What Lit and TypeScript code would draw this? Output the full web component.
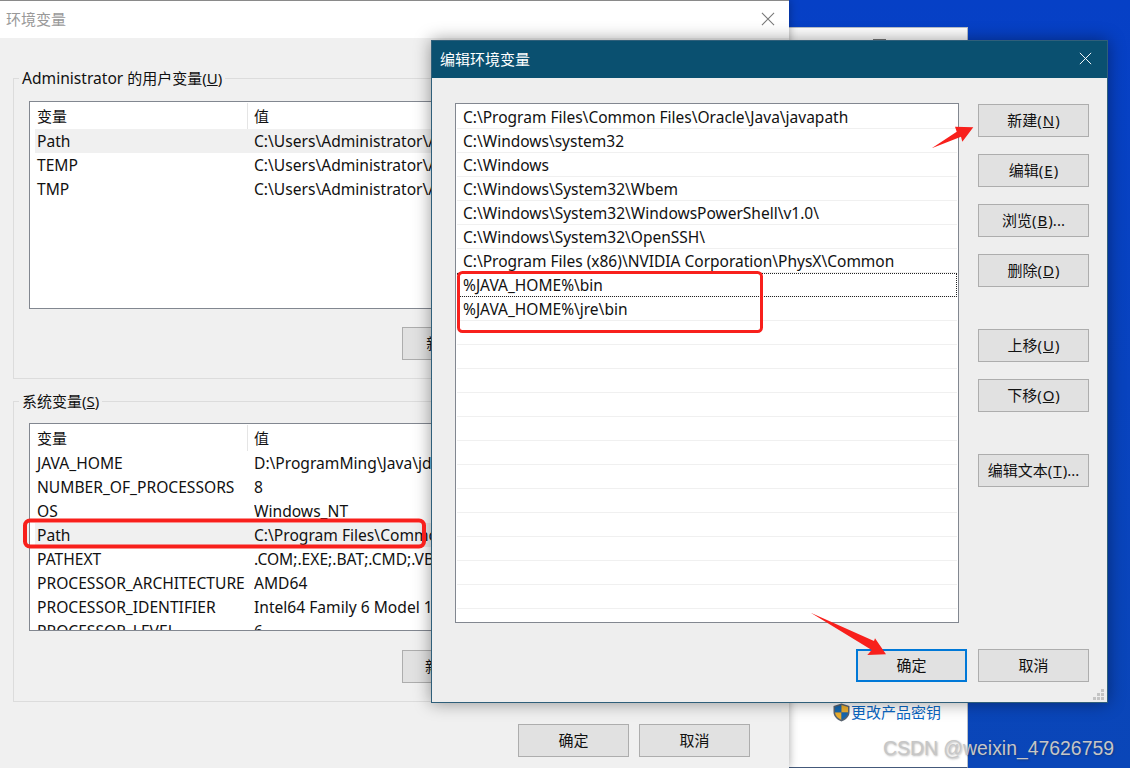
import { LitElement, html, css, svg } from "lit";
import { customElement } from "lit/decorators.js";

const userVars = [
  ["Path", "C:\\Users\\Administrator\\AppData\\Local\\Microsoft\\WindowsApps;"],
  ["TEMP", "C:\\Users\\Administrator\\AppData\\Local\\Temp"],
  ["TMP", "C:\\Users\\Administrator\\AppData\\Local\\Temp"],
];

const sysVars = [
  ["JAVA_HOME", "D:\\ProgramMing\\Java\\jdk1.8"],
  ["NUMBER_OF_PROCESSORS", "8"],
  ["OS", "Windows_NT"],
  ["Path", "C:\\Program Files\\Common Files\\Oracle\\Java\\javapath"],
  ["PATHEXT", ".COM;.EXE;.BAT;.CMD;.VBS"],
  ["PROCESSOR_ARCHITECTURE", "AMD64"],
  ["PROCESSOR_IDENTIFIER", "Intel64 Family 6 Model 142"],
  ["PROCESSOR_LEVEL", "6"],
];

const pathEntries = [
  "C:\\Program Files\\Common Files\\Oracle\\Java\\javapath",
  "C:\\Windows\\system32",
  "C:\\Windows",
  "C:\\Windows\\System32\\Wbem",
  "C:\\Windows\\System32\\WindowsPowerShell\\v1.0\\",
  "C:\\Windows\\System32\\OpenSSH\\",
  "C:\\Program Files (x86)\\NVIDIA Corporation\\PhysX\\Common",
  "%JAVA_HOME%\\bin",
  "%JAVA_HOME%\\jre\\bin",
  "", "", "", "", "", "", "", "", "", "", "", "",
];

const closeIcon = svg`<path d="M1 1 14 14M14 1 1 14" fill="none" stroke="currentColor" stroke-width="1.1"/>`;

@customElement("app-root")
export class AppRoot extends LitElement {
  static styles = css`
    :host {
      display: block;
      font-family: "Noto Sans", "Noto Sans CJK SC", sans-serif;
      font-size: 15px;
      color: #111;
    }
    .desktop {
      position: relative;
      width: 1130px;
      height: 768px;
      overflow: hidden;
      background: linear-gradient(180deg, #0640c6 0%, #0a46b8 100%);
    }
    .about {
      position: absolute;
      left: 780px;
      top: 27px;
      width: 188px;
      height: 741px;
      box-sizing: border-box;
      background: #fff;
      border: 1px solid #b9c0c8;
      border-bottom: 1px solid #44597a;
    }
    .about-bits {
      position: absolute;
      left: 92px;
      top: 11px;
      width: 13px;
      height: 2px;
      background: #777;
    }
    .about-link {
      position: absolute;
      left: 51px;
      top: 674px;
      display: flex;
      align-items: center;
      color: #0a66c2;
      line-height: 20px;
    }
    .window {
      position: absolute;
      left: 0;
      top: 0;
      width: 789px;
      height: 768px;
      box-sizing: border-box;
      display: flex;
      flex-direction: column;
      background: #f0f0f0;
      border-top: 1px solid #8a8a8a;
      box-shadow: 0 0 9px rgba(0, 0, 0, 0.35);
    }
    .titlebar {
      height: 37px;
      box-sizing: border-box;
      flex: none;
      display: flex;
      align-items: center;
      justify-content: space-between;
      padding: 0 14px 2px 6px;
      background: #fff;
      color: #999;
    }
    .titlebar svg {
      width: 14px;
      height: 14px;
      color: #777;
    }
    .groups {
      flex: 1;
      padding: 40px 14px 0 13px;
      display: flex;
      flex-direction: column;
      gap: 22px;
    }
    .group {
      height: 301px;
      box-sizing: border-box;
      border: 1px solid #dcdcdc;
      padding: 0 0 0 15px;
    }
    .legend {
      width: fit-content;
      margin: -11px 0 0 -10px;
      padding: 0 3px;
      line-height: 20px;
      background: #f0f0f0;
      white-space: nowrap;
    }
    .latin {
      font-size: 15.6px;
    }
    .listview {
      margin-top: 13px;
      height: 208px;
      box-sizing: border-box;
      width: 730px;
      border: 1px solid #828790;
      background: #fff;
      overflow: hidden;
    }
    .group.sys .listview {
      margin-top: 12px;
    }
    .group.sys .btn-row {
      margin-top: 19px;
    }
    .lv-head,
    .lv-row {
      display: grid;
      grid-template-columns: 219px 177px;
      margin-left: 5px;
      align-items: center;
      white-space: nowrap;
    }
    .lv-head {
      height: 27px;
    }
    .lv-head span + span {
      border-left: 1px solid #e5e5e5;
      height: 26px;
      line-height: 26px;
      margin-left: -7px;
      padding-left: 6px;
    }
    .lv-row {
      height: 24px;
      line-height: 24px;
      font-size: 15.6px;
    }
    .lv-row span {
      overflow: hidden;
    }
    .lv-row.sel {
      background: #f0f0f0;
      width: 100%;
    }
    .lv-head span:first-child,
    .lv-row span:first-child {
      padding-left: 2px;
    }
    .btn-row {
      margin: 18px 0 0 373px;
    }
    .btn {
      width: 111px;
      height: 33px;
      flex: none;
      box-sizing: border-box;
      display: flex;
      align-items: center;
      justify-content: center;
      padding-bottom: 2px;
      background: #e1e1e1;
      border: 1px solid #adadad;
      white-space: nowrap;
    }
    .btn u {
      padding: 0 1px;
    }
    .btn.default {
      border: 2px solid #0078d7;
    }
    .window-footer {
      flex: none;
      display: flex;
      gap: 10px;
      padding: 0 0 11px 518px;
    }
    .dialog {
      position: absolute;
      left: 431px;
      top: 40px;
      width: 677px;
      height: 663px;
      box-sizing: border-box;
      display: flex;
      flex-direction: column;
      background: #eeeeee;
      border: 1px solid #2f5f7a;
      box-shadow: 0 0 16px rgba(0, 0, 0, 0.4);
    }
    .dialog .titlebar {
      background: #0a5070;
      color: #fff;
      padding: 0 15px 2px 8px;
    }
    .dialog .titlebar svg {
      color: #fff;
      width: 13px;
      height: 13px;
    }
    .dialog-main {
      display: flex;
      gap: 19px;
      padding: 25px 18px 0 23px;
      height: 520px;
    }
    .pathlist {
      width: 504px;
      height: 520px;
      flex: none;
      box-sizing: border-box;
      border: 1px solid #828790;
      background: #fff;
      padding: 1px 1px 0;
      overflow: hidden;
    }
    .path-row {
      height: 24px;
      box-sizing: border-box;
      line-height: 24px;
      padding-left: 6px;
      font-size: 15.5px;
      border-bottom: 1px solid #f0f0f0;
      white-space: nowrap;
    }
    .path-row.focus {
      outline: 1px dotted #222;
      outline-offset: -1px;
    }
    .side {
      display: flex;
      flex-direction: column;
      gap: 17px;
      padding-top: 1px;
    }
    .side .sep {
      margin-top: 25px;
    }
    .dialog-footer {
      display: flex;
      justify-content: flex-end;
      gap: 11px;
      padding: 26px 18px 0 0;
    }
    .grip {
      position: absolute;
      right: 2px;
      bottom: 1px;
      width: 12px;
      height: 12px;
    }
    .marks {
      position: absolute;
      inset: 0;
      width: 1130px;
      height: 768px;
      pointer-events: none;
    }
    .watermark {
      position: absolute;
      right: 16px;
      top: 736px;
      font-family: "Liberation Sans", sans-serif;
      font-size: 19.4px;
      line-height: 24px;
      color: #c6c6c6;
      text-shadow: 1px 1px 2px rgba(40, 40, 40, 0.35);
      white-space: nowrap;
    }
  `;

  listview(rows: string[][], selected: string) {
    return html`<div class="listview">
      <div class="lv-head"><span>变量</span><span>值</span></div>
      ${rows.map(
        ([name, value]) => html`<div class="lv-row ${name === selected ? "sel" : ""}">
          <span>${name}</span><span>${value}</span>
        </div>`
      )}
    </div>`;
  }

  render() {
    return html`<div class="desktop">
      <div class="about">
        <div class="about-bits"></div>
        <div class="about-link">
          <svg width="19" height="19" viewBox="0 0 19 19">
            <path d="M9.500 .5 17.500 3V9c0 4.500-3.500 7.700-8 9.500C5 16.700 1.500 13.500 1.500 9V3Z" fill="#5a6470"/>
            <path d="M9.500 2 3 4V9.500H9.500Z" fill="#1668b0"/>
            <path d="M9.500 2 16 4V9.500H9.500Z" fill="#eeb02e"/>
            <path d="M3 9.500C3.300 12.800 6 15.400 9.500 17V9.500Z" fill="#eeb02e"/>
            <path d="M16 9.500C15.700 12.800 13 15.400 9.500 17V9.500Z" fill="#1668b0"/>
          </svg>
          更改产品密钥
        </div>
      </div>

      <div class="window">
        <div class="titlebar">
          <span>环境变量</span>
          <svg viewBox="0 0 15 15">${closeIcon}</svg>
        </div>
        <div class="groups">
          <div class="group">
            <div class="legend"><span class="latin">Administrator</span> 的用户变量(<u>U</u>)</div>
            ${this.listview(userVars, "Path")}
            <div class="btn-row"><div class="btn">新建(N)...</div></div>
          </div>
          <div class="group sys">
            <div class="legend">系统变量(<u>S</u>)</div>
            ${this.listview(sysVars, "Path")}
            <div class="btn-row"><div class="btn">新建(W)...</div></div>
          </div>
        </div>
        <div class="window-footer">
          <div class="btn">确定</div>
          <div class="btn">取消</div>
        </div>
      </div>

      <div class="dialog">
        <div class="titlebar">
          <span>编辑环境变量</span>
          <svg viewBox="0 0 15 15">${closeIcon}</svg>
        </div>
        <div class="dialog-main">
          <div class="pathlist">
            ${pathEntries.map(
              (p, i) => html`<div class="path-row ${i === 7 ? "focus" : ""}">${p}</div>`
            )}
          </div>
          <div class="side">
            <div class="btn">新建(<u>N</u>)</div>
            <div class="btn">编辑(<u>E</u>)</div>
            <div class="btn">浏览(<u>B</u>)...</div>
            <div class="btn">删除(<u>D</u>)</div>
            <div class="btn sep">上移(<u>U</u>)</div>
            <div class="btn">下移(<u>O</u>)</div>
            <div class="btn sep">编辑文本(<u>T</u>)...</div>
          </div>
        </div>
        <div class="dialog-footer">
          <div class="btn default">确定</div>
          <div class="btn">取消</div>
        </div>
        <svg class="grip" viewBox="0 0 12 12" fill="#c4c4c4">
          <rect x="8" y="0" width="3" height="3" />
          <rect x="4" y="4" width="3" height="3" />
          <rect x="8" y="4" width="3" height="3" />
          <rect x="0" y="8" width="3" height="3" />
          <rect x="4" y="8" width="3" height="3" />
          <rect x="8" y="8" width="3" height="3" />
        </svg>
      </div>

      <svg class="marks" viewBox="0 0 1130 768">
        <rect x="458.500" y="272.500" width="303" height="59" rx="4" fill="none" stroke="#f8201c" stroke-width="3" />
        <rect x="25" y="520.500" width="399" height="26" rx="5" fill="none" stroke="#f8201c" stroke-width="4" />
        <polygon fill="#f8201c" points="931.700,148.300 956.700,131.700 955,126.700 973.300,127.300 962.300,141.700 961,136.700" />
        <polygon fill="#f8201c" points="810.700,612.700 874,641 875,638.300 886,654.300 867.300,655 871.700,650" />
      </svg>
      <div class="watermark">CSDN @weixin_47626759</div>
    </div>`;
  }
}
